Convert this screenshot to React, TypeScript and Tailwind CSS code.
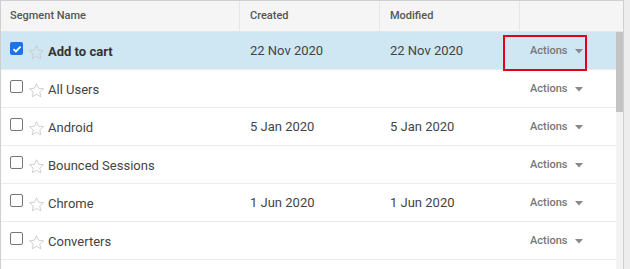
import React from "react";

type Segment = {
  name: string;
  created?: string;
  modified?: string;
  selected?: boolean;
};

const segments: Segment[] = [
  { name: "Add to cart", created: "22 Nov 2020", modified: "22 Nov 2020", selected: true },
  { name: "All Users" },
  { name: "Android", created: "5 Jan 2020", modified: "5 Jan 2020" },
  { name: "Bounced Sessions" },
  { name: "Chrome", created: "1 Jun 2020", modified: "1 Jun 2020" },
  { name: "Converters" },
];

function Star() {
  return (
    <svg width="17" height="17" viewBox="0 0 24 24" className="block shrink-0">
      <path
        d="M12 2.5l2.9 6.3 6.9.7-5.2 4.6 1.5 6.8L12 17.4l-6.1 3.5 1.5-6.8-5.2-4.6 6.9-.7z"
        fill="none"
        stroke="#c8c8c8"
        strokeWidth="1.2"
        strokeLinejoin="round"
      />
    </svg>
  );
}

function Checkbox({ checked }: { checked?: boolean }) {
  if (checked) {
    return (
      <span className="flex h-[13px] w-[13px] shrink-0 items-center justify-center rounded-[2px] bg-[#1a73e8]">
        <svg width="10" height="10" viewBox="0 0 10 10">
          <path d="M1.5 5.2l2.3 2.3L8.6 2.6" fill="none" stroke="#fff" strokeWidth="1.8" />
        </svg>
      </span>
    );
  }
  return <span className="block h-[13px] w-[13px] shrink-0 rounded-[2px] border border-[#767676] bg-white" />;
}

function Actions({ highlight }: { highlight?: boolean }) {
  return (
    <div className="relative flex h-full items-center pl-[10px] pt-[2px]">
      <span className="text-[11px] font-medium text-[#777]">Actions</span>
      <svg width="8" height="5" viewBox="0 0 8 5" className="ml-[7px]">
        <path d="M0 0h8L4 4.5z" fill="#888" />
      </svg>
      {highlight && (
        <div className="absolute left-[-17px] top-[3px] h-[36px] w-[84px] border-2 border-[#e3001b]" />
      )}
    </div>
  );
}

export default function App() {
  return (
    <div
      className="flex h-[269px] w-[630px] overflow-hidden bg-[#ededed]"
      style={{ fontFamily: "Roboto, 'Liberation Sans', sans-serif" }}
    >
      <div className="flex h-full w-[624px] flex-col border-l border-r border-t border-[#cfcfcf] bg-white">
        {/* header */}
        <div className="grid h-[31px] shrink-0 grid-cols-[239px_140px_140px_1fr] border-b border-[#e6e6e6] bg-[#f5f5f5] text-[11px] font-medium text-[#555]">
          <div className="flex items-center border-r border-[#e6e6e6] pl-[9px]">Segment Name</div>
          <div className="flex items-center border-r border-[#e6e6e6] pl-[10px]">Created</div>
          <div className="flex items-center border-r border-[#e6e6e6] pl-[10px]">Modified</div>
          <div />
        </div>

        {/* body + scrollbar */}
        <div className="flex min-h-0 flex-1">
          <div className="flex-1">
            {segments.map((s) => (
              <div
                key={s.name}
                className={`grid h-[38px] grid-cols-[239px_140px_140px_1fr] border-b border-[#ebebeb] text-[13px] ${
                  s.selected ? "bg-[#cfe6f3]" : "bg-white"
                }`}
              >
                <div className="flex items-center pl-[9px]">
                  <div className="mb-[4px]">
                    <Checkbox checked={s.selected} />
                  </div>
                  <div className="ml-[5px] mr-[3px] mt-[4px]">
                    <Star />
                  </div>
                  <span className={`pt-[2px] ${s.selected ? "font-bold text-[#333]" : "text-[#444]"}`}>{s.name}</span>
                </div>
                <div className="flex items-center pl-[10px] pt-[1px] text-[#444]">{s.created}</div>
                <div className="flex items-center pl-[10px] pt-[1px] text-[#444]">{s.modified}</div>
                <Actions highlight={s.selected} />
              </div>
            ))}
          </div>
          <div className="flex w-[7px] flex-col bg-[#f3f3f3]">
            <div className="h-[80px] bg-[#c4c4c4]" />
          </div>
        </div>
      </div>
    </div>
  );
}
